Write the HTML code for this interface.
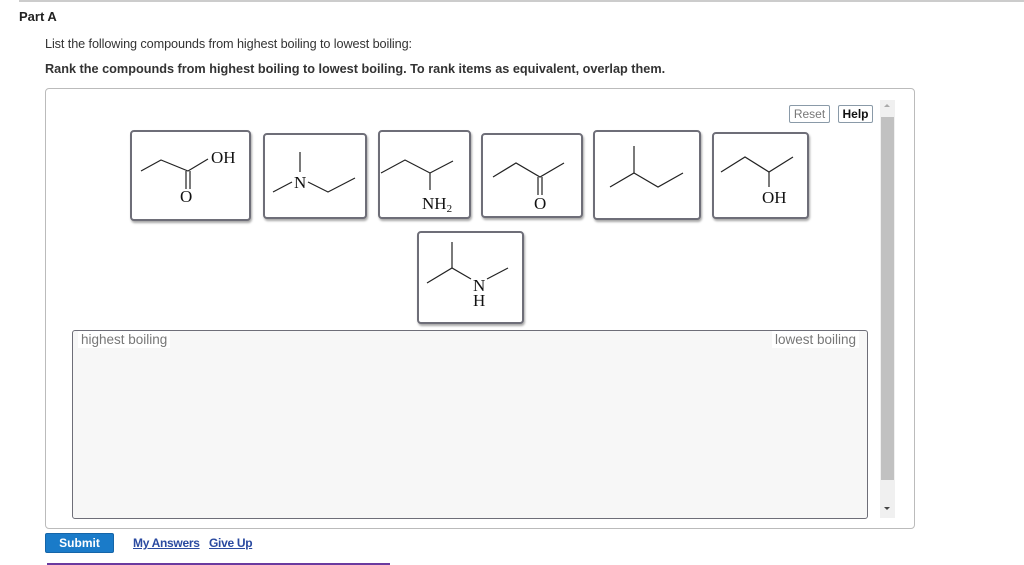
<!DOCTYPE html>
<html><head><style>
body{margin:0;width:1024px;height:565px;background:#fff;font-family:"Liberation Sans",Arial,sans-serif;position:relative;overflow:hidden}
.a{position:absolute}
.card{position:absolute;background:#fff;border:2px solid #6e6e78;border-radius:4px;box-shadow:1px 2px 2px rgba(0,0,0,.35);box-sizing:border-box}
.btn{position:absolute;border:1px solid #8a9aa8;border-radius:2px;font-size:12px;text-align:center;line-height:16px;background:#fff}
</style></head><body>
<div class="a" style="left:19px;top:0;width:1005px;height:2px;background:#ccc"></div>
<div class="a" style="left:19px;top:9px;font-size:13px;font-weight:bold;color:#222">Part A</div>
<div class="a" style="left:45px;top:37px;font-size:12.7px;color:#333;letter-spacing:-0.1px">List the following compounds from highest boiling to lowest boiling:</div>
<div class="a" style="left:45px;top:62px;font-size:12.7px;font-weight:bold;color:#333">Rank the compounds from highest boiling to lowest boiling. To rank items as equivalent, overlap them.</div>
<div class="a" style="left:45px;top:88px;width:870px;height:441px;border:1px solid #bbb;border-radius:4px;box-sizing:border-box"></div>
<div class="btn" style="left:789px;top:105px;width:39px;color:#777">Reset</div>
<div class="btn" style="left:838px;top:105px;width:33px;color:#111;font-weight:bold">Help</div>
<div class="a" style="left:880px;top:100px;width:15px;height:418px;background:#f0f0f0"></div>
<div class="a" style="left:881px;top:117px;width:13px;height:363px;background:#c1c1c1"></div>
<div class="a" style="left:884px;top:104px;border-left:3px solid transparent;border-right:3px solid transparent;border-bottom:3px solid #aaa"></div>
<div class="a" style="left:884px;top:507px;border-left:3px solid transparent;border-right:3px solid transparent;border-top:3px solid #444"></div>
<div class="a" style="left:72px;top:330px;width:796px;height:189px;background:#f7f7f7;border:1.5px solid #6e6e78;border-radius:3px;box-sizing:border-box"></div>
<div class="a" style="left:78px;top:331px;font-size:13.5px;color:#777;background:#fff;padding:1px 3px">highest boiling</div>
<div class="a" style="left:772px;top:331px;font-size:13.5px;color:#777;background:#fff;padding:1px 3px">lowest boiling</div>
<div class="card" style="left:130px;top:130px;width:121px;height:91px"></div>
<div class="card" style="left:263px;top:133px;width:104px;height:86px"></div>
<div class="card" style="left:378px;top:130px;width:93px;height:89px"></div>
<div class="card" style="left:481px;top:133px;width:102px;height:85px"></div>
<div class="card" style="left:593px;top:130px;width:108px;height:90px"></div>
<div class="card" style="left:712px;top:132px;width:97px;height:87px"></div>
<div class="card" style="left:417px;top:231px;width:107px;height:93px"></div>
<svg class="a" style="left:0;top:0" width="1024" height="565" font-family="Liberation Serif,serif" font-size="17" fill="#111">
<g stroke="#222" stroke-width="1.2" fill="none">
<polyline points="141,171 161,160 188,171 208,159"/>
<line x1="186" y1="171" x2="186" y2="189"/><line x1="190" y1="171" x2="190" y2="189"/>
<line x1="300" y1="152" x2="300" y2="172"/><polyline points="273,192 292,182"/><polyline points="308,182 328,192 355,178"/>
<polyline points="381,173 405,160 430,173 453,161"/><line x1="430" y1="173" x2="430" y2="190"/>
<polyline points="493,177 516,163 540,177 564,163"/><line x1="538" y1="177" x2="538" y2="195"/><line x1="542" y1="177" x2="542" y2="195"/>
<polyline points="610,187 634,173 658,187 683,173"/><line x1="634" y1="173" x2="634" y2="146"/>
<polyline points="721,172 745,157 769,172 793,157"/><line x1="769" y1="172" x2="769" y2="187"/>
<polyline points="427,283 452,268 471,279"/><line x1="452" y1="268" x2="452" y2="242"/><polyline points="487,279 508,268"/>
</g>
<text x="211" y="163">OH</text>
<text x="180" y="202">O</text>
<text x="294" y="188">N</text>
<text x="422" y="209">NH<tspan font-size="11" dy="3">2</tspan></text>
<text x="534" y="209">O</text>
<text x="762" y="203">OH</text>
<text x="473" y="291">N</text>
<text x="473" y="306">H</text>
</svg>
<div class="a" style="left:45px;top:533px;width:69px;height:20px;background:#1a7bc9;border:1px solid #1565a8;border-radius:2px;box-sizing:border-box;color:#fff;font-weight:bold;font-size:12px;text-align:center;line-height:18px">Submit</div>
<div class="a" style="left:133px;top:536px;font-size:12px;font-weight:bold;color:#2a4aa0;text-decoration:underline;letter-spacing:-0.3px">My Answers</div>
<div class="a" style="left:209px;top:536px;font-size:12px;font-weight:bold;color:#2a4aa0;text-decoration:underline;letter-spacing:-0.3px">Give Up</div>
<div class="a" style="left:47px;top:563px;width:343px;height:2px;background:#6a3aa0"></div>
</body></html>
